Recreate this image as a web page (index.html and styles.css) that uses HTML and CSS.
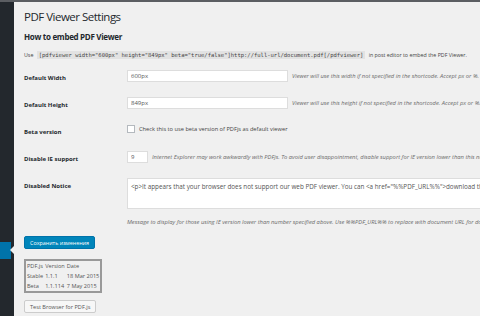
FILE: index.html
```html
<!DOCTYPE html>
<html lang="ru">
<head>
    <meta charset="UTF-8">
    <title>PDF Viewer Settings</title>
    <link rel="stylesheet" href="styles.css">
</head>
<body>
    <div class="adminbar"></div>
    <div class="layout">
        <div class="adminmenu">
            <div class="menu-current"></div>
        </div>
        <div class="wrap">
            <h1>PDF Viewer Settings</h1>
            <h2>How to embed PDF Viewer</h2>
            <p class="usage">Use <code>[pdfviewer width="600px" height="849px" beta="true/false"]http://full-url/document.pdf[/pdfviewer]</code> in post editor to embed the PDF Viewer.</p>

            <div class="form-table">
                <div class="row">
                    <div class="th">Default Width</div>
                    <div class="td">
                        <input class="text" type="text" value="600px">
                        <span class="desc">Viewer will use this width if not specified in the shortcode. Accept px or %.</span>
                    </div>
                </div>
                <div class="row">
                    <div class="th">Default Height</div>
                    <div class="td">
                        <input class="text" type="text" value="849px">
                        <span class="desc">Viewer will use this height if not specified in the shortcode. Accept px or %.</span>
                    </div>
                </div>
                <div class="row">
                    <div class="th">Beta version</div>
                    <div class="td">
                        <span class="checkbox"></span>
                        <span class="check-label">Check this to use beta version of PDFjs as default viewer</span>
                    </div>
                </div>
                <div class="row">
                    <div class="th">Disable IE support</div>
                    <div class="td">
                        <input class="text small" type="text" value="9">
                        <span class="desc">Internet Explorer may work awkwardly with PDFjs. To avoid user disappointment, disable support for IE version lower than this number.</span>
                    </div>
                </div>
                <div class="row notice-row">
                    <div class="th">Disabled Notice</div>
                    <div class="td column">
                        <div class="textarea">&lt;p&gt;It appears that your browser does not support our web PDF viewer. You can &lt;a href="%%PDF_URL%%"&gt;download the PDF&lt;/a&gt; instead.&lt;/p&gt;</div>
                        <span class="desc">Message to display for those using IE version lower than number specified above. Use %%PDF_URL%% to replace with document URL for download.</span>
                    </div>
                </div>
            </div>

            <button class="button-primary">Сохранить изменения</button>

            <table class="versions">
                <tr><td>PDF.js</td><td>Version</td><td>Date</td></tr>
                <tr><td>Stable</td><td>1.1.1</td><td>18 Mar 2015</td></tr>
                <tr><td>Beta</td><td>1.1.114</td><td>7 May 2015</td></tr>
            </table>

            <button class="button">Test Browser for PDF.js</button>
        </div>
    </div>
</body>
</html>
```

FILE: styles.css
```css
body {
    margin: 0;
    background: #f0f0f0;
    font-family: 'Open Sans', 'Noto Sans', sans-serif;
    color: #444;
    overflow: hidden;
    height: 316px;
}
.adminbar {
    height: 2px;
    background: #5b5e62;
}
.layout {
    display: flex;
    height: 314px;
}
.adminmenu {
    width: 14px;
    flex-shrink: 0;
    background: #23282d;
    padding-top: 240px;
}
.menu-current {
    position: relative;
    height: 17px;
    width: 11px;
    background: #0073aa;
}
.menu-current::after {
    content: '';
    position: absolute;
    right: -3px;
    top: 4px;
    border: 4px solid transparent;
    border-right-color: #f0f0f0;
    border-left: none;
}
.wrap {
    flex: 1;
    padding-left: 10px;
    min-width: 0;
    white-space: nowrap;
}
h1 {
    font-size: 11.5px;
    font-weight: 400;
    color: #23282d;
    margin: 7px 0 0;
    line-height: 16px;
    letter-spacing: -0.5px;
}
h2 {
    font-size: 8px;
    font-weight: 700;
    color: #23282d;
    margin: 6px 0 0;
    line-height: 12px;
    letter-spacing: -0.3px;
}
.usage {
    font-size: 5.3px;
    margin: 8px 0 0;
    line-height: 9px;
}
.usage code {
    font-family: 'DejaVu Sans Mono', monospace;
    font-size: 5.5px;
    background: #e2e2e2;
    padding: 1px 2px;
    margin: 0 2px;
}
.form-table {
    margin-top: 10px;
}
.row {
    display: flex;
    height: 27px;
}
.th {
    width: 103px;
    flex-shrink: 0;
    font-size: 6px;
    font-weight: 700;
    color: #23282d;
    padding-top: 4px;
}
.td {
    display: flex;
    align-items: flex-start;
    gap: 4px;
}
.td.column {
    flex-direction: column;
    gap: 7px;
}
.text {
    box-sizing: border-box;
    width: 161px;
    height: 12px;
    border: 1px solid #ddd;
    background: #fff;
    font-family: inherit;
    font-size: 6px;
    color: #555;
    padding: 0 3px;
    margin: 0;
}
.text.small {
    width: 21px;
}
.desc {
    font-size: 5.8px;
    font-style: italic;
    color: #6a6a6a;
    padding-top: 2px;
}
.checkbox {
    width: 8px;
    height: 8px;
    border: 1px solid #b4b9be;
    background: #fff;
    margin-top: 1px;
    box-sizing: border-box;
    flex-shrink: 0;
}
.check-label {
    font-size: 5.7px;
    color: #444;
    padding-top: 1px;
}
.notice-row {
    height: 58px;
}
.textarea {
    box-sizing: border-box;
    width: 360px;
    height: 31px;
    background: #fff;
    border: 1px solid #ddd;
    font-size: 6.3px;
    color: #555;
    padding: 3px;
    overflow: hidden;
}
.button-primary {
    display: block;
    margin: 0;
    height: 13px;
    padding: 0 5px;
    background: #0085ba;
    border: 1px solid #0073aa;
    border-radius: 2px;
    color: #fff;
    font-family: inherit;
    font-size: 5.4px;
}
.versions {
    margin-top: 10px;
    border: 2px solid #999;
    border-collapse: separate;
    border-spacing: 0;
    font-size: 5.6px;
    color: #555;
}
.versions td {
    padding: 0 1px;
    line-height: 10px;
}
.button {
    display: block;
    margin-top: 7px;
    height: 13px;
    padding: 0 5px;
    background: #f7f7f7;
    border: 1px solid #ccc;
    border-radius: 2px;
    color: #555;
    font-family: inherit;
    font-size: 5.6px;
}
```
